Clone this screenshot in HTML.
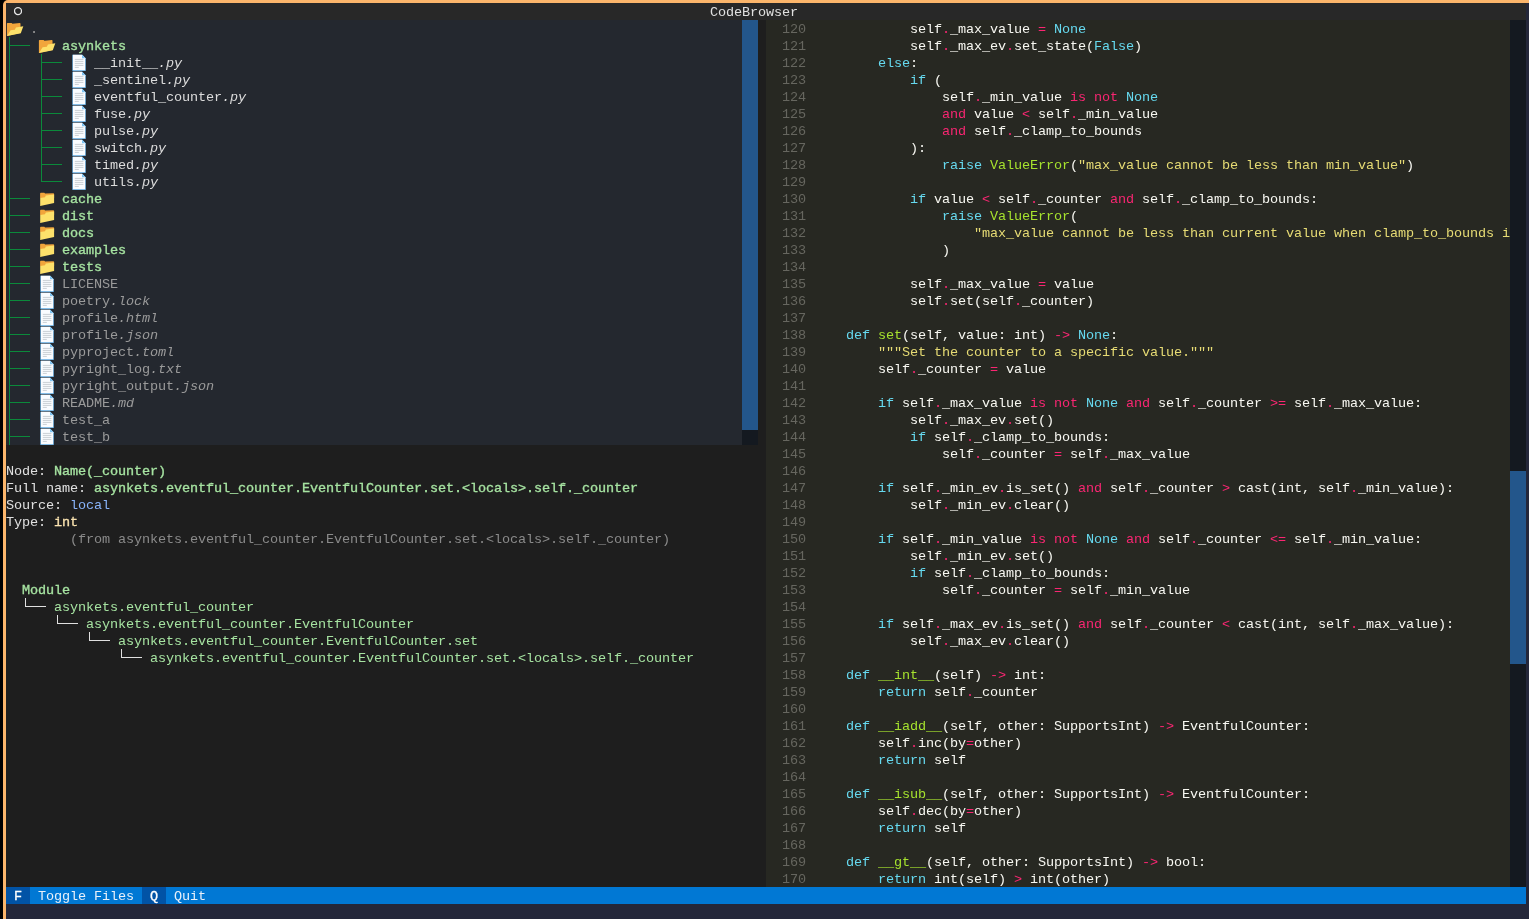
<!DOCTYPE html>
<html><head><meta charset="utf-8"><style>
html,body{margin:0;padding:0;width:1529px;height:919px;overflow:hidden;background:#000;}
.b{-webkit-text-stroke:0.3px currentColor;}
.t{position:absolute;white-space:pre;font-family:"Liberation Mono";font-size:13.5px;line-height:17px;letter-spacing:-0.1px;}
</style></head><body>
<div style="position:absolute;left:0px;top:0px;width:1529px;height:919px;background:#000000;"></div>
<div style="position:absolute;left:3px;top:0px;width:1526px;height:919px;background:#fbb56b;border-top-left-radius:5px;"></div>
<div style="position:absolute;left:6px;top:3px;width:1523px;height:916px;background:#24273a;border-top-left-radius:2px;"></div>
<div style="position:absolute;left:6px;top:3px;width:1520px;height:17px;background:#282828;"></div>
<div style="position:absolute;left:6px;top:20px;width:760px;height:867px;background:#1e1e1e;"></div>
<div style="position:absolute;left:6px;top:20px;width:736px;height:425px;background:#24282f;"></div>
<div style="position:absolute;left:742px;top:20px;width:16px;height:425px;background:#141920;"></div>
<div style="position:absolute;left:742px;top:20px;width:16px;height:410px;background:#23568b;"></div>
<div style="position:absolute;left:766px;top:20px;width:744px;height:867px;background:#272822;"></div>
<div style="position:absolute;left:1510px;top:20px;width:16px;height:867px;background:#141920;"></div>
<div style="position:absolute;left:1510px;top:470.5px;width:16px;height:193.39999999999998px;background:#23568b;"></div>
<div style="position:absolute;left:6px;top:887px;width:1520px;height:17px;background:#0178d4;"></div>
<div style="position:absolute;left:6px;top:887px;width:24px;height:17px;background:#0153a6;"></div>
<div style="position:absolute;left:142px;top:887px;width:24px;height:17px;background:#0153a6;"></div>
<svg style="position:absolute;left:14px;top:3px" width="8" height="17"><circle cx="4" cy="8.1" r="3.5" fill="none" stroke="#e6e6e6" stroke-width="1.3"/></svg>
<div style="position:absolute;left:9px;top:37px;width:1px;height:408px;background:#0b8a3b;"></div>
<div style="position:absolute;left:9px;top:45px;width:21px;height:1px;background:#0b8a3b;"></div>
<div style="position:absolute;left:9px;top:198px;width:21px;height:1px;background:#0b8a3b;"></div>
<div style="position:absolute;left:9px;top:215px;width:21px;height:1px;background:#0b8a3b;"></div>
<div style="position:absolute;left:9px;top:232px;width:21px;height:1px;background:#0b8a3b;"></div>
<div style="position:absolute;left:9px;top:249px;width:21px;height:1px;background:#0b8a3b;"></div>
<div style="position:absolute;left:9px;top:266px;width:21px;height:1px;background:#0b8a3b;"></div>
<div style="position:absolute;left:9px;top:283px;width:21px;height:1px;background:#0b8a3b;"></div>
<div style="position:absolute;left:9px;top:300px;width:21px;height:1px;background:#0b8a3b;"></div>
<div style="position:absolute;left:9px;top:317px;width:21px;height:1px;background:#0b8a3b;"></div>
<div style="position:absolute;left:9px;top:334px;width:21px;height:1px;background:#0b8a3b;"></div>
<div style="position:absolute;left:9px;top:351px;width:21px;height:1px;background:#0b8a3b;"></div>
<div style="position:absolute;left:9px;top:368px;width:21px;height:1px;background:#0b8a3b;"></div>
<div style="position:absolute;left:9px;top:385px;width:21px;height:1px;background:#0b8a3b;"></div>
<div style="position:absolute;left:9px;top:402px;width:21px;height:1px;background:#0b8a3b;"></div>
<div style="position:absolute;left:9px;top:419px;width:21px;height:1px;background:#0b8a3b;"></div>
<div style="position:absolute;left:9px;top:436px;width:21px;height:1px;background:#0b8a3b;"></div>
<div style="position:absolute;left:41px;top:54px;width:1px;height:128px;background:#0b8a3b;"></div>
<div style="position:absolute;left:41px;top:62px;width:21px;height:1px;background:#0b8a3b;"></div>
<div style="position:absolute;left:41px;top:79px;width:21px;height:1px;background:#0b8a3b;"></div>
<div style="position:absolute;left:41px;top:96px;width:21px;height:1px;background:#0b8a3b;"></div>
<div style="position:absolute;left:41px;top:113px;width:21px;height:1px;background:#0b8a3b;"></div>
<div style="position:absolute;left:41px;top:130px;width:21px;height:1px;background:#0b8a3b;"></div>
<div style="position:absolute;left:41px;top:147px;width:21px;height:1px;background:#0b8a3b;"></div>
<div style="position:absolute;left:41px;top:164px;width:21px;height:1px;background:#0b8a3b;"></div>
<div style="position:absolute;left:41px;top:181px;width:21px;height:1px;background:#0b8a3b;"></div>
<svg style="position:absolute;left:6px;top:20px" width="18" height="17" viewBox="0 0 18 17"><path d="M0.9 3.6 Q0.9 2.9 1.6 2.9 L5.5 2.9 Q6 2.9 6.4 3.8 L13.9 3.1 Q14.5 3.1 14.5 3.7 L14.5 13 L0.9 15.9 Z" fill="#f1a53c"/><path d="M1 16 L4.6 10.3 L8.9 9.7 L9.9 7.4 L17.3 6.2 L14.8 13.2 Z" fill="#fde16b"/></svg>
<svg style="position:absolute;left:38px;top:37px" width="18" height="17" viewBox="0 0 18 17"><path d="M0.9 3.6 Q0.9 2.9 1.6 2.9 L5.5 2.9 Q6 2.9 6.4 3.8 L13.9 3.1 Q14.5 3.1 14.5 3.7 L14.5 13 L0.9 15.9 Z" fill="#f1a53c"/><path d="M1 16 L4.6 10.3 L8.9 9.7 L9.9 7.4 L17.3 6.2 L14.8 13.2 Z" fill="#fde16b"/></svg>
<svg style="position:absolute;left:70px;top:54px" width="16" height="17" viewBox="0 0 16 17"><path d="M2.3 0.8 L12.4 0.8 L15.8 4.2 L15.8 16.9 L2.3 16.9 Z" fill="#5da8e0"/><path d="M2.9 0.8 L12 0.8 L15.2 4.2 L15.2 16.2 L2.9 16.2 Z" fill="#fafcff"/><path d="M12 0.8 L15.3 4.3 L12 4.3 Z" fill="#7cc3f2"/><rect x="4.8" y="4.9" width="8.6" height="0.9" fill="#c5cad0"/><rect x="4.8" y="6.9" width="8.6" height="0.9" fill="#c5cad0"/><rect x="4.8" y="8.9" width="8.6" height="0.9" fill="#c5cad0"/><rect x="4.8" y="10.9" width="8.6" height="0.9" fill="#c5cad0"/><rect x="4.8" y="12.9" width="4" height="0.9" fill="#c5cad0"/></svg>
<svg style="position:absolute;left:70px;top:71px" width="16" height="17" viewBox="0 0 16 17"><path d="M2.3 0.8 L12.4 0.8 L15.8 4.2 L15.8 16.9 L2.3 16.9 Z" fill="#5da8e0"/><path d="M2.9 0.8 L12 0.8 L15.2 4.2 L15.2 16.2 L2.9 16.2 Z" fill="#fafcff"/><path d="M12 0.8 L15.3 4.3 L12 4.3 Z" fill="#7cc3f2"/><rect x="4.8" y="4.9" width="8.6" height="0.9" fill="#c5cad0"/><rect x="4.8" y="6.9" width="8.6" height="0.9" fill="#c5cad0"/><rect x="4.8" y="8.9" width="8.6" height="0.9" fill="#c5cad0"/><rect x="4.8" y="10.9" width="8.6" height="0.9" fill="#c5cad0"/><rect x="4.8" y="12.9" width="4" height="0.9" fill="#c5cad0"/></svg>
<svg style="position:absolute;left:70px;top:88px" width="16" height="17" viewBox="0 0 16 17"><path d="M2.3 0.8 L12.4 0.8 L15.8 4.2 L15.8 16.9 L2.3 16.9 Z" fill="#5da8e0"/><path d="M2.9 0.8 L12 0.8 L15.2 4.2 L15.2 16.2 L2.9 16.2 Z" fill="#fafcff"/><path d="M12 0.8 L15.3 4.3 L12 4.3 Z" fill="#7cc3f2"/><rect x="4.8" y="4.9" width="8.6" height="0.9" fill="#c5cad0"/><rect x="4.8" y="6.9" width="8.6" height="0.9" fill="#c5cad0"/><rect x="4.8" y="8.9" width="8.6" height="0.9" fill="#c5cad0"/><rect x="4.8" y="10.9" width="8.6" height="0.9" fill="#c5cad0"/><rect x="4.8" y="12.9" width="4" height="0.9" fill="#c5cad0"/></svg>
<svg style="position:absolute;left:70px;top:105px" width="16" height="17" viewBox="0 0 16 17"><path d="M2.3 0.8 L12.4 0.8 L15.8 4.2 L15.8 16.9 L2.3 16.9 Z" fill="#5da8e0"/><path d="M2.9 0.8 L12 0.8 L15.2 4.2 L15.2 16.2 L2.9 16.2 Z" fill="#fafcff"/><path d="M12 0.8 L15.3 4.3 L12 4.3 Z" fill="#7cc3f2"/><rect x="4.8" y="4.9" width="8.6" height="0.9" fill="#c5cad0"/><rect x="4.8" y="6.9" width="8.6" height="0.9" fill="#c5cad0"/><rect x="4.8" y="8.9" width="8.6" height="0.9" fill="#c5cad0"/><rect x="4.8" y="10.9" width="8.6" height="0.9" fill="#c5cad0"/><rect x="4.8" y="12.9" width="4" height="0.9" fill="#c5cad0"/></svg>
<svg style="position:absolute;left:70px;top:122px" width="16" height="17" viewBox="0 0 16 17"><path d="M2.3 0.8 L12.4 0.8 L15.8 4.2 L15.8 16.9 L2.3 16.9 Z" fill="#5da8e0"/><path d="M2.9 0.8 L12 0.8 L15.2 4.2 L15.2 16.2 L2.9 16.2 Z" fill="#fafcff"/><path d="M12 0.8 L15.3 4.3 L12 4.3 Z" fill="#7cc3f2"/><rect x="4.8" y="4.9" width="8.6" height="0.9" fill="#c5cad0"/><rect x="4.8" y="6.9" width="8.6" height="0.9" fill="#c5cad0"/><rect x="4.8" y="8.9" width="8.6" height="0.9" fill="#c5cad0"/><rect x="4.8" y="10.9" width="8.6" height="0.9" fill="#c5cad0"/><rect x="4.8" y="12.9" width="4" height="0.9" fill="#c5cad0"/></svg>
<svg style="position:absolute;left:70px;top:139px" width="16" height="17" viewBox="0 0 16 17"><path d="M2.3 0.8 L12.4 0.8 L15.8 4.2 L15.8 16.9 L2.3 16.9 Z" fill="#5da8e0"/><path d="M2.9 0.8 L12 0.8 L15.2 4.2 L15.2 16.2 L2.9 16.2 Z" fill="#fafcff"/><path d="M12 0.8 L15.3 4.3 L12 4.3 Z" fill="#7cc3f2"/><rect x="4.8" y="4.9" width="8.6" height="0.9" fill="#c5cad0"/><rect x="4.8" y="6.9" width="8.6" height="0.9" fill="#c5cad0"/><rect x="4.8" y="8.9" width="8.6" height="0.9" fill="#c5cad0"/><rect x="4.8" y="10.9" width="8.6" height="0.9" fill="#c5cad0"/><rect x="4.8" y="12.9" width="4" height="0.9" fill="#c5cad0"/></svg>
<svg style="position:absolute;left:70px;top:156px" width="16" height="17" viewBox="0 0 16 17"><path d="M2.3 0.8 L12.4 0.8 L15.8 4.2 L15.8 16.9 L2.3 16.9 Z" fill="#5da8e0"/><path d="M2.9 0.8 L12 0.8 L15.2 4.2 L15.2 16.2 L2.9 16.2 Z" fill="#fafcff"/><path d="M12 0.8 L15.3 4.3 L12 4.3 Z" fill="#7cc3f2"/><rect x="4.8" y="4.9" width="8.6" height="0.9" fill="#c5cad0"/><rect x="4.8" y="6.9" width="8.6" height="0.9" fill="#c5cad0"/><rect x="4.8" y="8.9" width="8.6" height="0.9" fill="#c5cad0"/><rect x="4.8" y="10.9" width="8.6" height="0.9" fill="#c5cad0"/><rect x="4.8" y="12.9" width="4" height="0.9" fill="#c5cad0"/></svg>
<svg style="position:absolute;left:70px;top:173px" width="16" height="17" viewBox="0 0 16 17"><path d="M2.3 0.8 L12.4 0.8 L15.8 4.2 L15.8 16.9 L2.3 16.9 Z" fill="#5da8e0"/><path d="M2.9 0.8 L12 0.8 L15.2 4.2 L15.2 16.2 L2.9 16.2 Z" fill="#fafcff"/><path d="M12 0.8 L15.3 4.3 L12 4.3 Z" fill="#7cc3f2"/><rect x="4.8" y="4.9" width="8.6" height="0.9" fill="#c5cad0"/><rect x="4.8" y="6.9" width="8.6" height="0.9" fill="#c5cad0"/><rect x="4.8" y="8.9" width="8.6" height="0.9" fill="#c5cad0"/><rect x="4.8" y="10.9" width="8.6" height="0.9" fill="#c5cad0"/><rect x="4.8" y="12.9" width="4" height="0.9" fill="#c5cad0"/></svg>
<svg style="position:absolute;left:38px;top:190px" width="18" height="17" viewBox="0 0 18 17"><path d="M2.1 3.7 Q2.1 2.8 2.9 2.8 L6.2 2.8 Q6.8 2.8 7 3.4 L15.3 3.2 Q16.1 3.3 16.1 4 L16.1 8 L2.1 8 Z" fill="#f1a53c"/><path d="M2.2 16 L2.2 8 L7 7.2 L7.8 5.5 L16.1 4.4 L16.1 13 Z" fill="#fde16b"/></svg>
<svg style="position:absolute;left:38px;top:207px" width="18" height="17" viewBox="0 0 18 17"><path d="M2.1 3.7 Q2.1 2.8 2.9 2.8 L6.2 2.8 Q6.8 2.8 7 3.4 L15.3 3.2 Q16.1 3.3 16.1 4 L16.1 8 L2.1 8 Z" fill="#f1a53c"/><path d="M2.2 16 L2.2 8 L7 7.2 L7.8 5.5 L16.1 4.4 L16.1 13 Z" fill="#fde16b"/></svg>
<svg style="position:absolute;left:38px;top:224px" width="18" height="17" viewBox="0 0 18 17"><path d="M2.1 3.7 Q2.1 2.8 2.9 2.8 L6.2 2.8 Q6.8 2.8 7 3.4 L15.3 3.2 Q16.1 3.3 16.1 4 L16.1 8 L2.1 8 Z" fill="#f1a53c"/><path d="M2.2 16 L2.2 8 L7 7.2 L7.8 5.5 L16.1 4.4 L16.1 13 Z" fill="#fde16b"/></svg>
<svg style="position:absolute;left:38px;top:241px" width="18" height="17" viewBox="0 0 18 17"><path d="M2.1 3.7 Q2.1 2.8 2.9 2.8 L6.2 2.8 Q6.8 2.8 7 3.4 L15.3 3.2 Q16.1 3.3 16.1 4 L16.1 8 L2.1 8 Z" fill="#f1a53c"/><path d="M2.2 16 L2.2 8 L7 7.2 L7.8 5.5 L16.1 4.4 L16.1 13 Z" fill="#fde16b"/></svg>
<svg style="position:absolute;left:38px;top:258px" width="18" height="17" viewBox="0 0 18 17"><path d="M2.1 3.7 Q2.1 2.8 2.9 2.8 L6.2 2.8 Q6.8 2.8 7 3.4 L15.3 3.2 Q16.1 3.3 16.1 4 L16.1 8 L2.1 8 Z" fill="#f1a53c"/><path d="M2.2 16 L2.2 8 L7 7.2 L7.8 5.5 L16.1 4.4 L16.1 13 Z" fill="#fde16b"/></svg>
<svg style="position:absolute;left:38px;top:275px" width="16" height="17" viewBox="0 0 16 17"><path d="M2.3 0.8 L12.4 0.8 L15.8 4.2 L15.8 16.9 L2.3 16.9 Z" fill="#5da8e0"/><path d="M2.9 0.8 L12 0.8 L15.2 4.2 L15.2 16.2 L2.9 16.2 Z" fill="#fafcff"/><path d="M12 0.8 L15.3 4.3 L12 4.3 Z" fill="#7cc3f2"/><rect x="4.8" y="4.9" width="8.6" height="0.9" fill="#c5cad0"/><rect x="4.8" y="6.9" width="8.6" height="0.9" fill="#c5cad0"/><rect x="4.8" y="8.9" width="8.6" height="0.9" fill="#c5cad0"/><rect x="4.8" y="10.9" width="8.6" height="0.9" fill="#c5cad0"/><rect x="4.8" y="12.9" width="4" height="0.9" fill="#c5cad0"/></svg>
<svg style="position:absolute;left:38px;top:292px" width="16" height="17" viewBox="0 0 16 17"><path d="M2.3 0.8 L12.4 0.8 L15.8 4.2 L15.8 16.9 L2.3 16.9 Z" fill="#5da8e0"/><path d="M2.9 0.8 L12 0.8 L15.2 4.2 L15.2 16.2 L2.9 16.2 Z" fill="#fafcff"/><path d="M12 0.8 L15.3 4.3 L12 4.3 Z" fill="#7cc3f2"/><rect x="4.8" y="4.9" width="8.6" height="0.9" fill="#c5cad0"/><rect x="4.8" y="6.9" width="8.6" height="0.9" fill="#c5cad0"/><rect x="4.8" y="8.9" width="8.6" height="0.9" fill="#c5cad0"/><rect x="4.8" y="10.9" width="8.6" height="0.9" fill="#c5cad0"/><rect x="4.8" y="12.9" width="4" height="0.9" fill="#c5cad0"/></svg>
<svg style="position:absolute;left:38px;top:309px" width="16" height="17" viewBox="0 0 16 17"><path d="M2.3 0.8 L12.4 0.8 L15.8 4.2 L15.8 16.9 L2.3 16.9 Z" fill="#5da8e0"/><path d="M2.9 0.8 L12 0.8 L15.2 4.2 L15.2 16.2 L2.9 16.2 Z" fill="#fafcff"/><path d="M12 0.8 L15.3 4.3 L12 4.3 Z" fill="#7cc3f2"/><rect x="4.8" y="4.9" width="8.6" height="0.9" fill="#c5cad0"/><rect x="4.8" y="6.9" width="8.6" height="0.9" fill="#c5cad0"/><rect x="4.8" y="8.9" width="8.6" height="0.9" fill="#c5cad0"/><rect x="4.8" y="10.9" width="8.6" height="0.9" fill="#c5cad0"/><rect x="4.8" y="12.9" width="4" height="0.9" fill="#c5cad0"/></svg>
<svg style="position:absolute;left:38px;top:326px" width="16" height="17" viewBox="0 0 16 17"><path d="M2.3 0.8 L12.4 0.8 L15.8 4.2 L15.8 16.9 L2.3 16.9 Z" fill="#5da8e0"/><path d="M2.9 0.8 L12 0.8 L15.2 4.2 L15.2 16.2 L2.9 16.2 Z" fill="#fafcff"/><path d="M12 0.8 L15.3 4.3 L12 4.3 Z" fill="#7cc3f2"/><rect x="4.8" y="4.9" width="8.6" height="0.9" fill="#c5cad0"/><rect x="4.8" y="6.9" width="8.6" height="0.9" fill="#c5cad0"/><rect x="4.8" y="8.9" width="8.6" height="0.9" fill="#c5cad0"/><rect x="4.8" y="10.9" width="8.6" height="0.9" fill="#c5cad0"/><rect x="4.8" y="12.9" width="4" height="0.9" fill="#c5cad0"/></svg>
<svg style="position:absolute;left:38px;top:343px" width="16" height="17" viewBox="0 0 16 17"><path d="M2.3 0.8 L12.4 0.8 L15.8 4.2 L15.8 16.9 L2.3 16.9 Z" fill="#5da8e0"/><path d="M2.9 0.8 L12 0.8 L15.2 4.2 L15.2 16.2 L2.9 16.2 Z" fill="#fafcff"/><path d="M12 0.8 L15.3 4.3 L12 4.3 Z" fill="#7cc3f2"/><rect x="4.8" y="4.9" width="8.6" height="0.9" fill="#c5cad0"/><rect x="4.8" y="6.9" width="8.6" height="0.9" fill="#c5cad0"/><rect x="4.8" y="8.9" width="8.6" height="0.9" fill="#c5cad0"/><rect x="4.8" y="10.9" width="8.6" height="0.9" fill="#c5cad0"/><rect x="4.8" y="12.9" width="4" height="0.9" fill="#c5cad0"/></svg>
<svg style="position:absolute;left:38px;top:360px" width="16" height="17" viewBox="0 0 16 17"><path d="M2.3 0.8 L12.4 0.8 L15.8 4.2 L15.8 16.9 L2.3 16.9 Z" fill="#5da8e0"/><path d="M2.9 0.8 L12 0.8 L15.2 4.2 L15.2 16.2 L2.9 16.2 Z" fill="#fafcff"/><path d="M12 0.8 L15.3 4.3 L12 4.3 Z" fill="#7cc3f2"/><rect x="4.8" y="4.9" width="8.6" height="0.9" fill="#c5cad0"/><rect x="4.8" y="6.9" width="8.6" height="0.9" fill="#c5cad0"/><rect x="4.8" y="8.9" width="8.6" height="0.9" fill="#c5cad0"/><rect x="4.8" y="10.9" width="8.6" height="0.9" fill="#c5cad0"/><rect x="4.8" y="12.9" width="4" height="0.9" fill="#c5cad0"/></svg>
<svg style="position:absolute;left:38px;top:377px" width="16" height="17" viewBox="0 0 16 17"><path d="M2.3 0.8 L12.4 0.8 L15.8 4.2 L15.8 16.9 L2.3 16.9 Z" fill="#5da8e0"/><path d="M2.9 0.8 L12 0.8 L15.2 4.2 L15.2 16.2 L2.9 16.2 Z" fill="#fafcff"/><path d="M12 0.8 L15.3 4.3 L12 4.3 Z" fill="#7cc3f2"/><rect x="4.8" y="4.9" width="8.6" height="0.9" fill="#c5cad0"/><rect x="4.8" y="6.9" width="8.6" height="0.9" fill="#c5cad0"/><rect x="4.8" y="8.9" width="8.6" height="0.9" fill="#c5cad0"/><rect x="4.8" y="10.9" width="8.6" height="0.9" fill="#c5cad0"/><rect x="4.8" y="12.9" width="4" height="0.9" fill="#c5cad0"/></svg>
<svg style="position:absolute;left:38px;top:394px" width="16" height="17" viewBox="0 0 16 17"><path d="M2.3 0.8 L12.4 0.8 L15.8 4.2 L15.8 16.9 L2.3 16.9 Z" fill="#5da8e0"/><path d="M2.9 0.8 L12 0.8 L15.2 4.2 L15.2 16.2 L2.9 16.2 Z" fill="#fafcff"/><path d="M12 0.8 L15.3 4.3 L12 4.3 Z" fill="#7cc3f2"/><rect x="4.8" y="4.9" width="8.6" height="0.9" fill="#c5cad0"/><rect x="4.8" y="6.9" width="8.6" height="0.9" fill="#c5cad0"/><rect x="4.8" y="8.9" width="8.6" height="0.9" fill="#c5cad0"/><rect x="4.8" y="10.9" width="8.6" height="0.9" fill="#c5cad0"/><rect x="4.8" y="12.9" width="4" height="0.9" fill="#c5cad0"/></svg>
<svg style="position:absolute;left:38px;top:411px" width="16" height="17" viewBox="0 0 16 17"><path d="M2.3 0.8 L12.4 0.8 L15.8 4.2 L15.8 16.9 L2.3 16.9 Z" fill="#5da8e0"/><path d="M2.9 0.8 L12 0.8 L15.2 4.2 L15.2 16.2 L2.9 16.2 Z" fill="#fafcff"/><path d="M12 0.8 L15.3 4.3 L12 4.3 Z" fill="#7cc3f2"/><rect x="4.8" y="4.9" width="8.6" height="0.9" fill="#c5cad0"/><rect x="4.8" y="6.9" width="8.6" height="0.9" fill="#c5cad0"/><rect x="4.8" y="8.9" width="8.6" height="0.9" fill="#c5cad0"/><rect x="4.8" y="10.9" width="8.6" height="0.9" fill="#c5cad0"/><rect x="4.8" y="12.9" width="4" height="0.9" fill="#c5cad0"/></svg>
<svg style="position:absolute;left:38px;top:428px" width="16" height="17" viewBox="0 0 16 17"><path d="M2.3 0.8 L12.4 0.8 L15.8 4.2 L15.8 16.9 L2.3 16.9 Z" fill="#5da8e0"/><path d="M2.9 0.8 L12 0.8 L15.2 4.2 L15.2 16.2 L2.9 16.2 Z" fill="#fafcff"/><path d="M12 0.8 L15.3 4.3 L12 4.3 Z" fill="#7cc3f2"/><rect x="4.8" y="4.9" width="8.6" height="0.9" fill="#c5cad0"/><rect x="4.8" y="6.9" width="8.6" height="0.9" fill="#c5cad0"/><rect x="4.8" y="8.9" width="8.6" height="0.9" fill="#c5cad0"/><rect x="4.8" y="10.9" width="8.6" height="0.9" fill="#c5cad0"/><rect x="4.8" y="12.9" width="4" height="0.9" fill="#c5cad0"/></svg>
<div style="position:absolute;left:25px;top:598px;width:1px;height:9px;background:#e0e0e0;"></div>
<div style="position:absolute;left:25px;top:606px;width:21px;height:1px;background:#e0e0e0;"></div>
<div style="position:absolute;left:57px;top:615px;width:1px;height:9px;background:#e0e0e0;"></div>
<div style="position:absolute;left:57px;top:623px;width:21px;height:1px;background:#e0e0e0;"></div>
<div style="position:absolute;left:89px;top:632px;width:1px;height:9px;background:#e0e0e0;"></div>
<div style="position:absolute;left:89px;top:640px;width:21px;height:1px;background:#e0e0e0;"></div>
<div style="position:absolute;left:121px;top:649px;width:1px;height:9px;background:#e0e0e0;"></div>
<div style="position:absolute;left:121px;top:657px;width:21px;height:1px;background:#e0e0e0;"></div>
<div style="position:absolute;left:0;top:0;width:1529px;height:919px;will-change:transform">
<div class="t" style="left:710px;top:4px;color:#e0e0e0;">CodeBrowser</div>
<div class="t" style="left:30px;top:21px;color:#9a9a9a;">.</div>
<div class="t b" style="left:62px;top:38px;color:#a6e3a1;">asynkets</div>
<div class="t" style="left:94px;top:55px;color:#dcdcdc;">__init__</div>
<div class="t" style="left:158px;top:55px;color:#dcdcdc;font-style:italic;">.py</div>
<div class="t" style="left:94px;top:72px;color:#dcdcdc;">_sentinel</div>
<div class="t" style="left:166px;top:72px;color:#dcdcdc;font-style:italic;">.py</div>
<div class="t" style="left:94px;top:89px;color:#dcdcdc;">eventful_counter</div>
<div class="t" style="left:222px;top:89px;color:#dcdcdc;font-style:italic;">.py</div>
<div class="t" style="left:94px;top:106px;color:#dcdcdc;">fuse</div>
<div class="t" style="left:126px;top:106px;color:#dcdcdc;font-style:italic;">.py</div>
<div class="t" style="left:94px;top:123px;color:#dcdcdc;">pulse</div>
<div class="t" style="left:134px;top:123px;color:#dcdcdc;font-style:italic;">.py</div>
<div class="t" style="left:94px;top:140px;color:#dcdcdc;">switch</div>
<div class="t" style="left:142px;top:140px;color:#dcdcdc;font-style:italic;">.py</div>
<div class="t" style="left:94px;top:157px;color:#dcdcdc;">timed</div>
<div class="t" style="left:134px;top:157px;color:#dcdcdc;font-style:italic;">.py</div>
<div class="t" style="left:94px;top:174px;color:#dcdcdc;">utils</div>
<div class="t" style="left:134px;top:174px;color:#dcdcdc;font-style:italic;">.py</div>
<div class="t b" style="left:62px;top:191px;color:#a6e3a1;">cache</div>
<div class="t b" style="left:62px;top:208px;color:#a6e3a1;">dist</div>
<div class="t b" style="left:62px;top:225px;color:#a6e3a1;">docs</div>
<div class="t b" style="left:62px;top:242px;color:#a6e3a1;">examples</div>
<div class="t b" style="left:62px;top:259px;color:#a6e3a1;">tests</div>
<div class="t" style="left:62px;top:276px;color:#9a9a9a;">LICENSE</div>
<div class="t" style="left:62px;top:293px;color:#9a9a9a;">poetry</div>
<div class="t" style="left:110px;top:293px;color:#9a9a9a;font-style:italic;">.lock</div>
<div class="t" style="left:62px;top:310px;color:#9a9a9a;">profile</div>
<div class="t" style="left:118px;top:310px;color:#9a9a9a;font-style:italic;">.html</div>
<div class="t" style="left:62px;top:327px;color:#9a9a9a;">profile</div>
<div class="t" style="left:118px;top:327px;color:#9a9a9a;font-style:italic;">.json</div>
<div class="t" style="left:62px;top:344px;color:#9a9a9a;">pyproject</div>
<div class="t" style="left:134px;top:344px;color:#9a9a9a;font-style:italic;">.toml</div>
<div class="t" style="left:62px;top:361px;color:#9a9a9a;">pyright_log</div>
<div class="t" style="left:150px;top:361px;color:#9a9a9a;font-style:italic;">.txt</div>
<div class="t" style="left:62px;top:378px;color:#9a9a9a;">pyright_output</div>
<div class="t" style="left:174px;top:378px;color:#9a9a9a;font-style:italic;">.json</div>
<div class="t" style="left:62px;top:395px;color:#9a9a9a;">README</div>
<div class="t" style="left:110px;top:395px;color:#9a9a9a;font-style:italic;">.md</div>
<div class="t" style="left:62px;top:412px;color:#9a9a9a;">test_a</div>
<div class="t" style="left:62px;top:429px;color:#9a9a9a;">test_b</div>
<div class="t" style="left:6px;top:463px;color:#e0e0e0;">Node: </div>
<div class="t b" style="left:54px;top:463px;color:#a6e3a1;">Name(_counter)</div>
<div class="t" style="left:6px;top:480px;color:#e0e0e0;">Full name: </div>
<div class="t b" style="left:94px;top:480px;color:#a6e3a1;">asynkets.eventful_counter.EventfulCounter.set.&lt;locals&gt;.self._counter</div>
<div class="t" style="left:6px;top:497px;color:#e0e0e0;">Source: </div>
<div class="t" style="left:70px;top:497px;color:#89b4fa;">local</div>
<div class="t" style="left:6px;top:514px;color:#e0e0e0;">Type: </div>
<div class="t b" style="left:54px;top:514px;color:#f9e2af;">int</div>
<div class="t" style="left:70px;top:531px;color:#8a8a8a;">(from asynkets.eventful_counter.EventfulCounter.set.&lt;locals&gt;.self._counter)</div>
<div class="t b" style="left:22px;top:582px;color:#a6e3a1;">Module</div>
<div class="t" style="left:54px;top:599px;color:#a6e3a1;">asynkets.eventful_counter</div>
<div class="t" style="left:86px;top:616px;color:#a6e3a1;">asynkets.eventful_counter.EventfulCounter</div>
<div class="t" style="left:118px;top:633px;color:#a6e3a1;">asynkets.eventful_counter.EventfulCounter.set</div>
<div class="t" style="left:150px;top:650px;color:#a6e3a1;">asynkets.eventful_counter.EventfulCounter.set.&lt;locals&gt;.self._counter</div>
<div class="t" style="left:782px;top:21px;color:#66665f;">120</div>
<div class="t" style="left:910px;top:21px;color:#f8f8f2;">self</div>
<div class="t" style="left:942px;top:21px;color:#f92672;">.</div>
<div class="t" style="left:950px;top:21px;color:#f8f8f2;">_max_value</div>
<div class="t" style="left:1038px;top:21px;color:#f92672;">=</div>
<div class="t" style="left:1054px;top:21px;color:#66d9ef;">None</div>
<div class="t" style="left:782px;top:38px;color:#66665f;">121</div>
<div class="t" style="left:910px;top:38px;color:#f8f8f2;">self</div>
<div class="t" style="left:942px;top:38px;color:#f92672;">.</div>
<div class="t" style="left:950px;top:38px;color:#f8f8f2;">_max_ev</div>
<div class="t" style="left:1006px;top:38px;color:#f92672;">.</div>
<div class="t" style="left:1014px;top:38px;color:#f8f8f2;">set_state(</div>
<div class="t" style="left:1094px;top:38px;color:#66d9ef;">False</div>
<div class="t" style="left:1134px;top:38px;color:#f8f8f2;">)</div>
<div class="t" style="left:782px;top:55px;color:#66665f;">122</div>
<div class="t" style="left:878px;top:55px;color:#66d9ef;">else</div>
<div class="t" style="left:910px;top:55px;color:#f8f8f2;">:</div>
<div class="t" style="left:782px;top:72px;color:#66665f;">123</div>
<div class="t" style="left:910px;top:72px;color:#66d9ef;">if</div>
<div class="t" style="left:934px;top:72px;color:#f8f8f2;">(</div>
<div class="t" style="left:782px;top:89px;color:#66665f;">124</div>
<div class="t" style="left:942px;top:89px;color:#f8f8f2;">self</div>
<div class="t" style="left:974px;top:89px;color:#f92672;">.</div>
<div class="t" style="left:982px;top:89px;color:#f8f8f2;">_min_value</div>
<div class="t" style="left:1070px;top:89px;color:#f92672;">is not</div>
<div class="t" style="left:1126px;top:89px;color:#66d9ef;">None</div>
<div class="t" style="left:782px;top:106px;color:#66665f;">125</div>
<div class="t" style="left:942px;top:106px;color:#f92672;">and</div>
<div class="t" style="left:974px;top:106px;color:#f8f8f2;">value</div>
<div class="t" style="left:1022px;top:106px;color:#f92672;">&lt;</div>
<div class="t" style="left:1038px;top:106px;color:#f8f8f2;">self</div>
<div class="t" style="left:1070px;top:106px;color:#f92672;">.</div>
<div class="t" style="left:1078px;top:106px;color:#f8f8f2;">_min_value</div>
<div class="t" style="left:782px;top:123px;color:#66665f;">126</div>
<div class="t" style="left:942px;top:123px;color:#f92672;">and</div>
<div class="t" style="left:974px;top:123px;color:#f8f8f2;">self</div>
<div class="t" style="left:1006px;top:123px;color:#f92672;">.</div>
<div class="t" style="left:1014px;top:123px;color:#f8f8f2;">_clamp_to_bounds</div>
<div class="t" style="left:782px;top:140px;color:#66665f;">127</div>
<div class="t" style="left:910px;top:140px;color:#f8f8f2;">):</div>
<div class="t" style="left:782px;top:157px;color:#66665f;">128</div>
<div class="t" style="left:942px;top:157px;color:#66d9ef;">raise</div>
<div class="t" style="left:990px;top:157px;color:#a6e22e;">ValueError</div>
<div class="t" style="left:1070px;top:157px;color:#f8f8f2;">(</div>
<div class="t" style="left:1078px;top:157px;color:#e6db74;">&quot;max_value cannot be less than min_value&quot;</div>
<div class="t" style="left:1406px;top:157px;color:#f8f8f2;">)</div>
<div class="t" style="left:782px;top:174px;color:#66665f;">129</div>
<div class="t" style="left:782px;top:191px;color:#66665f;">130</div>
<div class="t" style="left:910px;top:191px;color:#66d9ef;">if</div>
<div class="t" style="left:934px;top:191px;color:#f8f8f2;">value</div>
<div class="t" style="left:982px;top:191px;color:#f92672;">&lt;</div>
<div class="t" style="left:998px;top:191px;color:#f8f8f2;">self</div>
<div class="t" style="left:1030px;top:191px;color:#f92672;">.</div>
<div class="t" style="left:1038px;top:191px;color:#f8f8f2;">_counter</div>
<div class="t" style="left:1110px;top:191px;color:#f92672;">and</div>
<div class="t" style="left:1142px;top:191px;color:#f8f8f2;">self</div>
<div class="t" style="left:1174px;top:191px;color:#f92672;">.</div>
<div class="t" style="left:1182px;top:191px;color:#f8f8f2;">_clamp_to_bounds:</div>
<div class="t" style="left:782px;top:208px;color:#66665f;">131</div>
<div class="t" style="left:942px;top:208px;color:#66d9ef;">raise</div>
<div class="t" style="left:990px;top:208px;color:#a6e22e;">ValueError</div>
<div class="t" style="left:1070px;top:208px;color:#f8f8f2;">(</div>
<div class="t" style="left:782px;top:225px;color:#66665f;">132</div>
<div class="t" style="left:974px;top:225px;color:#e6db74;">&quot;max_value cannot be less than current value when clamp_to_bounds i</div>
<div class="t" style="left:782px;top:242px;color:#66665f;">133</div>
<div class="t" style="left:942px;top:242px;color:#f8f8f2;">)</div>
<div class="t" style="left:782px;top:259px;color:#66665f;">134</div>
<div class="t" style="left:782px;top:276px;color:#66665f;">135</div>
<div class="t" style="left:910px;top:276px;color:#f8f8f2;">self</div>
<div class="t" style="left:942px;top:276px;color:#f92672;">.</div>
<div class="t" style="left:950px;top:276px;color:#f8f8f2;">_max_value</div>
<div class="t" style="left:1038px;top:276px;color:#f92672;">=</div>
<div class="t" style="left:1054px;top:276px;color:#f8f8f2;">value</div>
<div class="t" style="left:782px;top:293px;color:#66665f;">136</div>
<div class="t" style="left:910px;top:293px;color:#f8f8f2;">self</div>
<div class="t" style="left:942px;top:293px;color:#f92672;">.</div>
<div class="t" style="left:950px;top:293px;color:#f8f8f2;">set(self</div>
<div class="t" style="left:1014px;top:293px;color:#f92672;">.</div>
<div class="t" style="left:1022px;top:293px;color:#f8f8f2;">_counter)</div>
<div class="t" style="left:782px;top:310px;color:#66665f;">137</div>
<div class="t" style="left:782px;top:327px;color:#66665f;">138</div>
<div class="t" style="left:846px;top:327px;color:#66d9ef;">def</div>
<div class="t" style="left:878px;top:327px;color:#a6e22e;">set</div>
<div class="t" style="left:902px;top:327px;color:#f8f8f2;">(self, value: int)</div>
<div class="t" style="left:1054px;top:327px;color:#f92672;">-&gt;</div>
<div class="t" style="left:1078px;top:327px;color:#66d9ef;">None</div>
<div class="t" style="left:1110px;top:327px;color:#f8f8f2;">:</div>
<div class="t" style="left:782px;top:344px;color:#66665f;">139</div>
<div class="t" style="left:878px;top:344px;color:#e6db74;">&quot;&quot;&quot;Set the counter to a specific value.&quot;&quot;&quot;</div>
<div class="t" style="left:782px;top:361px;color:#66665f;">140</div>
<div class="t" style="left:878px;top:361px;color:#f8f8f2;">self</div>
<div class="t" style="left:910px;top:361px;color:#f92672;">.</div>
<div class="t" style="left:918px;top:361px;color:#f8f8f2;">_counter</div>
<div class="t" style="left:990px;top:361px;color:#f92672;">=</div>
<div class="t" style="left:1006px;top:361px;color:#f8f8f2;">value</div>
<div class="t" style="left:782px;top:378px;color:#66665f;">141</div>
<div class="t" style="left:782px;top:395px;color:#66665f;">142</div>
<div class="t" style="left:878px;top:395px;color:#66d9ef;">if</div>
<div class="t" style="left:902px;top:395px;color:#f8f8f2;">self</div>
<div class="t" style="left:934px;top:395px;color:#f92672;">.</div>
<div class="t" style="left:942px;top:395px;color:#f8f8f2;">_max_value</div>
<div class="t" style="left:1030px;top:395px;color:#f92672;">is not</div>
<div class="t" style="left:1086px;top:395px;color:#66d9ef;">None</div>
<div class="t" style="left:1126px;top:395px;color:#f92672;">and</div>
<div class="t" style="left:1158px;top:395px;color:#f8f8f2;">self</div>
<div class="t" style="left:1190px;top:395px;color:#f92672;">.</div>
<div class="t" style="left:1198px;top:395px;color:#f8f8f2;">_counter</div>
<div class="t" style="left:1270px;top:395px;color:#f92672;">&gt;=</div>
<div class="t" style="left:1294px;top:395px;color:#f8f8f2;">self</div>
<div class="t" style="left:1326px;top:395px;color:#f92672;">.</div>
<div class="t" style="left:1334px;top:395px;color:#f8f8f2;">_max_value:</div>
<div class="t" style="left:782px;top:412px;color:#66665f;">143</div>
<div class="t" style="left:910px;top:412px;color:#f8f8f2;">self</div>
<div class="t" style="left:942px;top:412px;color:#f92672;">.</div>
<div class="t" style="left:950px;top:412px;color:#f8f8f2;">_max_ev</div>
<div class="t" style="left:1006px;top:412px;color:#f92672;">.</div>
<div class="t" style="left:1014px;top:412px;color:#f8f8f2;">set()</div>
<div class="t" style="left:782px;top:429px;color:#66665f;">144</div>
<div class="t" style="left:910px;top:429px;color:#66d9ef;">if</div>
<div class="t" style="left:934px;top:429px;color:#f8f8f2;">self</div>
<div class="t" style="left:966px;top:429px;color:#f92672;">.</div>
<div class="t" style="left:974px;top:429px;color:#f8f8f2;">_clamp_to_bounds:</div>
<div class="t" style="left:782px;top:446px;color:#66665f;">145</div>
<div class="t" style="left:942px;top:446px;color:#f8f8f2;">self</div>
<div class="t" style="left:974px;top:446px;color:#f92672;">.</div>
<div class="t" style="left:982px;top:446px;color:#f8f8f2;">_counter</div>
<div class="t" style="left:1054px;top:446px;color:#f92672;">=</div>
<div class="t" style="left:1070px;top:446px;color:#f8f8f2;">self</div>
<div class="t" style="left:1102px;top:446px;color:#f92672;">.</div>
<div class="t" style="left:1110px;top:446px;color:#f8f8f2;">_max_value</div>
<div class="t" style="left:782px;top:463px;color:#66665f;">146</div>
<div class="t" style="left:782px;top:480px;color:#66665f;">147</div>
<div class="t" style="left:878px;top:480px;color:#66d9ef;">if</div>
<div class="t" style="left:902px;top:480px;color:#f8f8f2;">self</div>
<div class="t" style="left:934px;top:480px;color:#f92672;">.</div>
<div class="t" style="left:942px;top:480px;color:#f8f8f2;">_min_ev</div>
<div class="t" style="left:998px;top:480px;color:#f92672;">.</div>
<div class="t" style="left:1006px;top:480px;color:#f8f8f2;">is_set()</div>
<div class="t" style="left:1078px;top:480px;color:#f92672;">and</div>
<div class="t" style="left:1110px;top:480px;color:#f8f8f2;">self</div>
<div class="t" style="left:1142px;top:480px;color:#f92672;">.</div>
<div class="t" style="left:1150px;top:480px;color:#f8f8f2;">_counter</div>
<div class="t" style="left:1222px;top:480px;color:#f92672;">&gt;</div>
<div class="t" style="left:1238px;top:480px;color:#f8f8f2;">cast(int, self</div>
<div class="t" style="left:1350px;top:480px;color:#f92672;">.</div>
<div class="t" style="left:1358px;top:480px;color:#f8f8f2;">_min_value):</div>
<div class="t" style="left:782px;top:497px;color:#66665f;">148</div>
<div class="t" style="left:910px;top:497px;color:#f8f8f2;">self</div>
<div class="t" style="left:942px;top:497px;color:#f92672;">.</div>
<div class="t" style="left:950px;top:497px;color:#f8f8f2;">_min_ev</div>
<div class="t" style="left:1006px;top:497px;color:#f92672;">.</div>
<div class="t" style="left:1014px;top:497px;color:#f8f8f2;">clear()</div>
<div class="t" style="left:782px;top:514px;color:#66665f;">149</div>
<div class="t" style="left:782px;top:531px;color:#66665f;">150</div>
<div class="t" style="left:878px;top:531px;color:#66d9ef;">if</div>
<div class="t" style="left:902px;top:531px;color:#f8f8f2;">self</div>
<div class="t" style="left:934px;top:531px;color:#f92672;">.</div>
<div class="t" style="left:942px;top:531px;color:#f8f8f2;">_min_value</div>
<div class="t" style="left:1030px;top:531px;color:#f92672;">is not</div>
<div class="t" style="left:1086px;top:531px;color:#66d9ef;">None</div>
<div class="t" style="left:1126px;top:531px;color:#f92672;">and</div>
<div class="t" style="left:1158px;top:531px;color:#f8f8f2;">self</div>
<div class="t" style="left:1190px;top:531px;color:#f92672;">.</div>
<div class="t" style="left:1198px;top:531px;color:#f8f8f2;">_counter</div>
<div class="t" style="left:1270px;top:531px;color:#f92672;">&lt;=</div>
<div class="t" style="left:1294px;top:531px;color:#f8f8f2;">self</div>
<div class="t" style="left:1326px;top:531px;color:#f92672;">.</div>
<div class="t" style="left:1334px;top:531px;color:#f8f8f2;">_min_value:</div>
<div class="t" style="left:782px;top:548px;color:#66665f;">151</div>
<div class="t" style="left:910px;top:548px;color:#f8f8f2;">self</div>
<div class="t" style="left:942px;top:548px;color:#f92672;">.</div>
<div class="t" style="left:950px;top:548px;color:#f8f8f2;">_min_ev</div>
<div class="t" style="left:1006px;top:548px;color:#f92672;">.</div>
<div class="t" style="left:1014px;top:548px;color:#f8f8f2;">set()</div>
<div class="t" style="left:782px;top:565px;color:#66665f;">152</div>
<div class="t" style="left:910px;top:565px;color:#66d9ef;">if</div>
<div class="t" style="left:934px;top:565px;color:#f8f8f2;">self</div>
<div class="t" style="left:966px;top:565px;color:#f92672;">.</div>
<div class="t" style="left:974px;top:565px;color:#f8f8f2;">_clamp_to_bounds:</div>
<div class="t" style="left:782px;top:582px;color:#66665f;">153</div>
<div class="t" style="left:942px;top:582px;color:#f8f8f2;">self</div>
<div class="t" style="left:974px;top:582px;color:#f92672;">.</div>
<div class="t" style="left:982px;top:582px;color:#f8f8f2;">_counter</div>
<div class="t" style="left:1054px;top:582px;color:#f92672;">=</div>
<div class="t" style="left:1070px;top:582px;color:#f8f8f2;">self</div>
<div class="t" style="left:1102px;top:582px;color:#f92672;">.</div>
<div class="t" style="left:1110px;top:582px;color:#f8f8f2;">_min_value</div>
<div class="t" style="left:782px;top:599px;color:#66665f;">154</div>
<div class="t" style="left:782px;top:616px;color:#66665f;">155</div>
<div class="t" style="left:878px;top:616px;color:#66d9ef;">if</div>
<div class="t" style="left:902px;top:616px;color:#f8f8f2;">self</div>
<div class="t" style="left:934px;top:616px;color:#f92672;">.</div>
<div class="t" style="left:942px;top:616px;color:#f8f8f2;">_max_ev</div>
<div class="t" style="left:998px;top:616px;color:#f92672;">.</div>
<div class="t" style="left:1006px;top:616px;color:#f8f8f2;">is_set()</div>
<div class="t" style="left:1078px;top:616px;color:#f92672;">and</div>
<div class="t" style="left:1110px;top:616px;color:#f8f8f2;">self</div>
<div class="t" style="left:1142px;top:616px;color:#f92672;">.</div>
<div class="t" style="left:1150px;top:616px;color:#f8f8f2;">_counter</div>
<div class="t" style="left:1222px;top:616px;color:#f92672;">&lt;</div>
<div class="t" style="left:1238px;top:616px;color:#f8f8f2;">cast(int, self</div>
<div class="t" style="left:1350px;top:616px;color:#f92672;">.</div>
<div class="t" style="left:1358px;top:616px;color:#f8f8f2;">_max_value):</div>
<div class="t" style="left:782px;top:633px;color:#66665f;">156</div>
<div class="t" style="left:910px;top:633px;color:#f8f8f2;">self</div>
<div class="t" style="left:942px;top:633px;color:#f92672;">.</div>
<div class="t" style="left:950px;top:633px;color:#f8f8f2;">_max_ev</div>
<div class="t" style="left:1006px;top:633px;color:#f92672;">.</div>
<div class="t" style="left:1014px;top:633px;color:#f8f8f2;">clear()</div>
<div class="t" style="left:782px;top:650px;color:#66665f;">157</div>
<div class="t" style="left:782px;top:667px;color:#66665f;">158</div>
<div class="t" style="left:846px;top:667px;color:#66d9ef;">def</div>
<div class="t" style="left:878px;top:667px;color:#a6e22e;">__int__</div>
<div class="t" style="left:934px;top:667px;color:#f8f8f2;">(self)</div>
<div class="t" style="left:990px;top:667px;color:#f92672;">-&gt;</div>
<div class="t" style="left:1014px;top:667px;color:#f8f8f2;">int:</div>
<div class="t" style="left:782px;top:684px;color:#66665f;">159</div>
<div class="t" style="left:878px;top:684px;color:#66d9ef;">return</div>
<div class="t" style="left:934px;top:684px;color:#f8f8f2;">self</div>
<div class="t" style="left:966px;top:684px;color:#f92672;">.</div>
<div class="t" style="left:974px;top:684px;color:#f8f8f2;">_counter</div>
<div class="t" style="left:782px;top:701px;color:#66665f;">160</div>
<div class="t" style="left:782px;top:718px;color:#66665f;">161</div>
<div class="t" style="left:846px;top:718px;color:#66d9ef;">def</div>
<div class="t" style="left:878px;top:718px;color:#a6e22e;">__iadd__</div>
<div class="t" style="left:942px;top:718px;color:#f8f8f2;">(self, other: SupportsInt)</div>
<div class="t" style="left:1158px;top:718px;color:#f92672;">-&gt;</div>
<div class="t" style="left:1182px;top:718px;color:#f8f8f2;">EventfulCounter:</div>
<div class="t" style="left:782px;top:735px;color:#66665f;">162</div>
<div class="t" style="left:878px;top:735px;color:#f8f8f2;">self</div>
<div class="t" style="left:910px;top:735px;color:#f92672;">.</div>
<div class="t" style="left:918px;top:735px;color:#f8f8f2;">inc(by</div>
<div class="t" style="left:966px;top:735px;color:#f92672;">=</div>
<div class="t" style="left:974px;top:735px;color:#f8f8f2;">other)</div>
<div class="t" style="left:782px;top:752px;color:#66665f;">163</div>
<div class="t" style="left:878px;top:752px;color:#66d9ef;">return</div>
<div class="t" style="left:934px;top:752px;color:#f8f8f2;">self</div>
<div class="t" style="left:782px;top:769px;color:#66665f;">164</div>
<div class="t" style="left:782px;top:786px;color:#66665f;">165</div>
<div class="t" style="left:846px;top:786px;color:#66d9ef;">def</div>
<div class="t" style="left:878px;top:786px;color:#a6e22e;">__isub__</div>
<div class="t" style="left:942px;top:786px;color:#f8f8f2;">(self, other: SupportsInt)</div>
<div class="t" style="left:1158px;top:786px;color:#f92672;">-&gt;</div>
<div class="t" style="left:1182px;top:786px;color:#f8f8f2;">EventfulCounter:</div>
<div class="t" style="left:782px;top:803px;color:#66665f;">166</div>
<div class="t" style="left:878px;top:803px;color:#f8f8f2;">self</div>
<div class="t" style="left:910px;top:803px;color:#f92672;">.</div>
<div class="t" style="left:918px;top:803px;color:#f8f8f2;">dec(by</div>
<div class="t" style="left:966px;top:803px;color:#f92672;">=</div>
<div class="t" style="left:974px;top:803px;color:#f8f8f2;">other)</div>
<div class="t" style="left:782px;top:820px;color:#66665f;">167</div>
<div class="t" style="left:878px;top:820px;color:#66d9ef;">return</div>
<div class="t" style="left:934px;top:820px;color:#f8f8f2;">self</div>
<div class="t" style="left:782px;top:837px;color:#66665f;">168</div>
<div class="t" style="left:782px;top:854px;color:#66665f;">169</div>
<div class="t" style="left:846px;top:854px;color:#66d9ef;">def</div>
<div class="t" style="left:878px;top:854px;color:#a6e22e;">__gt__</div>
<div class="t" style="left:926px;top:854px;color:#f8f8f2;">(self, other: SupportsInt)</div>
<div class="t" style="left:1142px;top:854px;color:#f92672;">-&gt;</div>
<div class="t" style="left:1166px;top:854px;color:#f8f8f2;">bool:</div>
<div class="t" style="left:782px;top:871px;color:#66665f;">170</div>
<div class="t" style="left:878px;top:871px;color:#66d9ef;">return</div>
<div class="t" style="left:934px;top:871px;color:#f8f8f2;">int(self)</div>
<div class="t" style="left:1014px;top:871px;color:#f92672;">&gt;</div>
<div class="t" style="left:1030px;top:871px;color:#f8f8f2;">int(other)</div>
<div class="t b" style="left:6px;top:888px;color:#ffffff;"> F </div>
<div class="t" style="left:30px;top:888px;color:#e8f0fa;"> Toggle Files </div>
<div class="t b" style="left:142px;top:888px;color:#ffffff;"> Q </div>
<div class="t" style="left:166px;top:888px;color:#e8f0fa;"> Quit </div>
</div>
</body></html>
